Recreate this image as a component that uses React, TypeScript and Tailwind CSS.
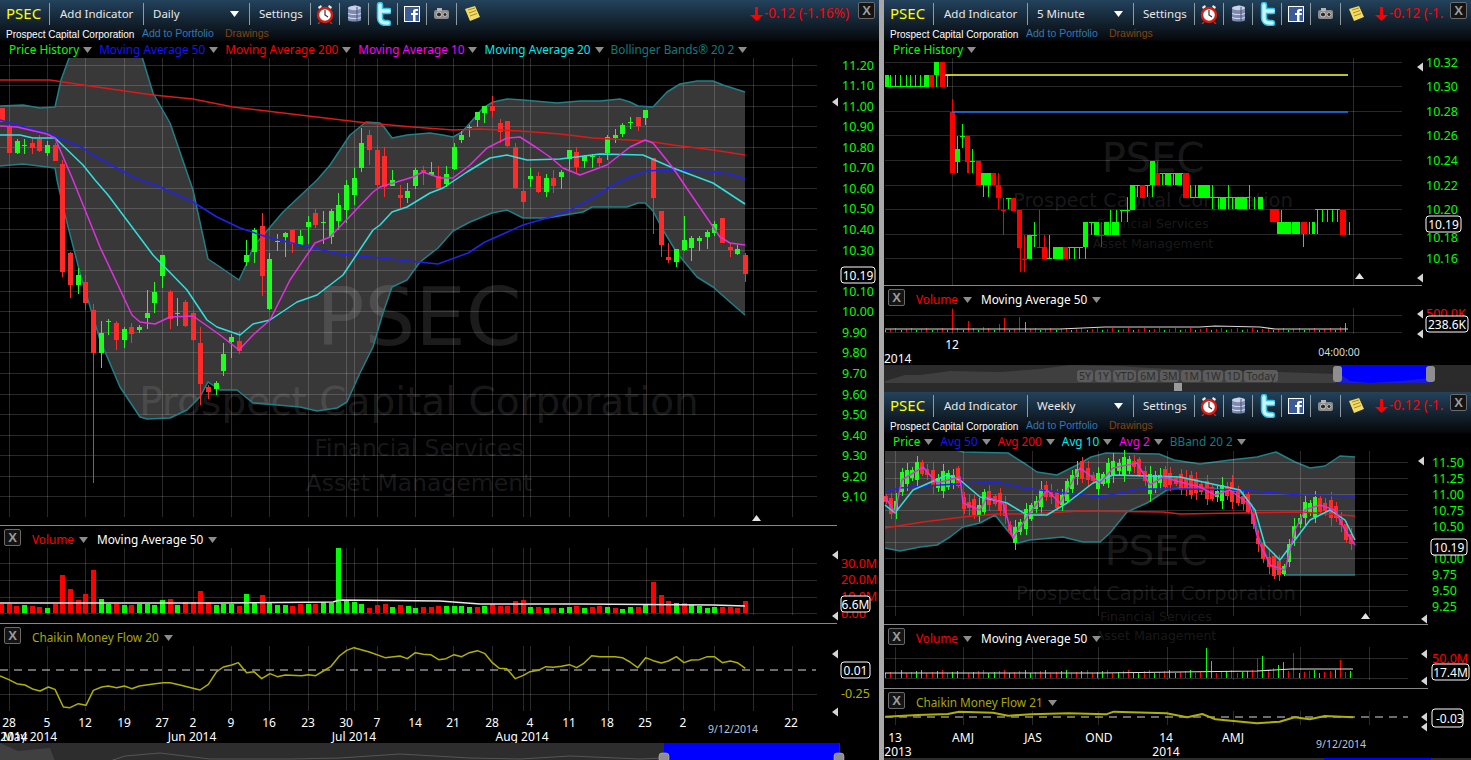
import type { ReactNode } from "react";

type Pt = [number, number];
type Candle = [number, "g" | "r", number, number, number, number];
type Bar = [number, number, number, number, string];

const GREEN = "#00ff00";
const RED = "#ff0000";
const CG = "#1eff1e";
const CR = "#ff2a2a";
const TEAL = "#1f8088";
const BAND = "#383838";
const OLIVE = "#b0b000";

const pts = (list: Pt[]) => list.map((p) => p.join(",")).join(" ");

// x, colour, wick top, body top, body bottom, wick bottom
const mainCandles: Candle[] = [
  [2, "r", 108, 108, 122, 122], [9, "r", 125, 127, 153, 153], [17, "g", 139, 141, 153, 154], [24, "g", 139, 145, 146, 154],
  [32, "r", 139, 143, 148, 154], [39, "r", 135, 139, 151, 152], [47, "g", 141, 145, 153, 156], [55, "r", 143, 145, 161, 161],
  [62, "r", 160, 164, 272, 277], [70, "r", 252, 253, 285, 298], [78, "g", 268, 275, 285, 294], [85, "r", 275, 282, 303, 310],
  [93, "r", 304, 310, 353, 483], [101, "g", 321, 333, 353, 368], [108, "g", 319, 321, 322, 335], [116, "r", 321, 323, 340, 350],
  [124, "g", 327, 329, 340, 348], [131, "r", 323, 327, 334, 343], [139, "g", 325, 327, 330, 333], [147, "g", 290, 313, 318, 329],
  [154, "g", 282, 292, 303, 313], [162, "g", 255, 255, 276, 288], [170, "r", 290, 292, 319, 329], [177, "g", 298, 313, 314, 326],
  [185, "r", 300, 302, 326, 327], [193, "r", 310, 313, 340, 341], [200, "r", 327, 343, 384, 405], [208, "r", 385, 387, 392, 399],
  [216, "g", 381, 383, 389, 395], [223, "g", 343, 354, 371, 376], [231, "g", 334, 337, 342, 358], [239, "r", 331, 341, 351, 354],
  [246, "g", 240, 255, 262, 266], [254, "g", 228, 230, 252, 263], [262, "r", 213, 226, 276, 296], [269, "g", 253, 259, 309, 310],
  [277, "g", 234, 241, 242, 251], [285, "g", 232, 233, 237, 257], [292, "r", 230, 230, 244, 253], [300, "g", 230, 236, 245, 245],
  [308, "g", 216, 222, 227, 244], [315, "r", 209, 213, 225, 228], [323, "g", 211, 222, 223, 244], [331, "g", 209, 211, 237, 244],
  [338, "g", 193, 205, 221, 230], [346, "g", 180, 185, 210, 223], [354, "g", 168, 178, 195, 205], [361, "g", 128, 143, 168, 172],
  [369, "r", 130, 135, 150, 165], [377, "r", 145, 150, 185, 187], [384, "r", 147, 156, 187, 197], [392, "g", 170, 180, 186, 186],
  [400, "r", 185, 195, 198, 208], [407, "g", 183, 191, 198, 203], [415, "g", 168, 170, 186, 189], [423, "r", 166, 170, 172, 185],
  [431, "g", 162, 172, 175, 176], [438, "r", 166, 176, 188, 188], [446, "g", 166, 174, 184, 187], [454, "g", 143, 147, 169, 170],
  [461, "g", 131, 135, 140, 143], [469, "g", 125, 127, 128, 137], [477, "g", 112, 112, 120, 127], [484, "g", 106, 106, 113, 123],
  [492, "r", 96, 106, 111, 117], [500, "r", 119, 123, 132, 143], [507, "r", 121, 121, 146, 147], [515, "r", 143, 147, 188, 189],
  [523, "r", 180, 191, 202, 209], [530, "g", 168, 176, 179, 187], [538, "r", 172, 176, 192, 193], [546, "g", 174, 178, 192, 197],
  [553, "r", 170, 178, 186, 193], [561, "g", 170, 172, 177, 189], [569, "g", 150, 150, 159, 172], [576, "r", 147, 152, 167, 173],
  [584, "g", 155, 156, 161, 168], [592, "g", 154, 156, 157, 168], [599, "r", 156, 158, 163, 168], [607, "g", 135, 137, 153, 160],
  [615, "g", 129, 135, 138, 143], [622, "g", 123, 125, 134, 137], [630, "g", 117, 122, 123, 129], [638, "r", 117, 117, 126, 131],
  [645, "g", 110, 110, 118, 125], [653, "r", 158, 158, 198, 234], [661, "r", 211, 211, 245, 257], [668, "r", 243, 257, 260, 263],
  [676, "g", 249, 249, 262, 267], [684, "g", 216, 240, 250, 251], [691, "g", 236, 238, 248, 261], [699, "g", 236, 238, 241, 251],
  [707, "g", 230, 232, 237, 249], [714, "g", 221, 224, 233, 236], [722, "r", 218, 218, 243, 243], [730, "r", 243, 247, 250, 257],
  [737, "g", 245, 249, 254, 255], [745, "r", 253, 255, 274, 282],
];

const upper: Pt[] = [[0, 106], [23, 105], [40, 108], [55, 107], [61, 80], [72, 50], [140, 50], [153, 93], [170, 123], [193, 190], [208, 259], [220, 267], [239, 280], [247, 263], [253, 247], [283, 212], [317, 180], [330, 165], [350, 135], [366, 122], [380, 123], [384, 127], [392, 138], [407, 135], [430, 133], [443, 135], [453, 137], [462, 132], [470, 123], [483, 108], [493, 102], [507, 99], [523, 100], [557, 103], [580, 101], [600, 101], [620, 99], [630, 102], [638, 106], [653, 107], [667, 92], [680, 84], [697, 81], [713, 81], [723, 85], [745, 92]];
const lower: Pt[] = [[0, 166], [23, 164], [55, 168], [57, 180], [65, 215], [80, 273], [100, 340], [120, 387], [140, 417], [147, 419], [170, 418], [187, 410], [200, 397], [208, 382], [220, 390], [237, 390], [253, 403], [300, 407], [317, 411], [337, 408], [347, 402], [360, 373], [373, 347], [383, 313], [392, 287], [407, 280], [420, 262], [438, 248], [453, 231], [470, 222], [492, 213], [507, 210], [523, 218], [547, 218], [583, 212], [592, 207], [627, 207], [638, 203], [645, 203], [653, 211], [663, 230], [677, 253], [697, 277], [713, 287], [730, 302], [745, 315]];
const ma50: Pt[] = [[0, 120], [17, 125], [47, 133], [83, 148], [93, 155], [133, 177], [160, 187], [193, 202], [217, 217], [240, 228], [267, 237], [300, 245], [340, 254], [380, 258], [438, 264], [468, 253], [485, 242], [523, 225], [547, 218], [570, 210], [593, 198], [613, 185], [630, 177], [647, 171], [663, 170], [713, 172], [730, 174], [745, 179]];
const ma200: Pt[] = [[0, 80], [50, 80], [83, 85], [153, 95], [193, 99], [233, 107], [283, 113], [367, 123], [413, 127], [453, 130], [480, 129], [520, 131], [560, 134], [593, 138], [647, 141], [673, 145], [713, 150], [745, 155]];
const ma10: Pt[] = [[0, 126], [17, 127], [47, 134], [55, 138], [73, 180], [100, 247], [132, 315], [140, 322], [155, 324], [170, 317], [193, 316], [220, 335], [239, 350], [253, 335], [270, 320], [290, 280], [315, 243], [330, 237], [353, 213], [373, 192], [380, 187], [413, 177], [423, 172], [440, 178], [453, 178], [470, 165], [487, 148], [507, 138], [520, 137], [537, 148], [550, 157], [563, 168], [580, 175], [607, 165], [630, 147], [645, 140], [653, 143], [673, 168], [720, 237], [730, 243], [745, 245]];
const ma20: Pt[] = [[0, 135], [20, 135], [33, 138], [55, 138], [83, 165], [95, 180], [108, 195], [153, 255], [187, 290], [207, 320], [217, 327], [240, 335], [253, 324], [270, 320], [297, 302], [317, 295], [343, 275], [373, 230], [380, 225], [392, 212], [407, 207], [430, 193], [443, 188], [467, 172], [490, 158], [507, 155], [527, 160], [560, 159], [600, 154], [643, 155], [673, 168], [713, 183], [745, 204]];

const volLeft: [string, number][] = [
  ["r", 9], ["r", 9], ["r", 7], ["g", 8], ["r", 7], ["r", 6], ["g", 5], ["r", 9], ["r", 38], ["r", 24], ["r", 13], ["r", 19], ["r", 43], ["g", 14], ["g", 9], ["r", 9],
  ["g", 8], ["r", 8], ["g", 9], ["g", 9], ["g", 8], ["g", 13], ["r", 14], ["g", 8], ["r", 11], ["r", 11], ["r", 22], ["r", 11], ["g", 8], ["g", 9], ["g", 9], ["r", 7],
  ["g", 19], ["g", 11], ["r", 18], ["g", 10], ["g", 8], ["g", 8], ["r", 7], ["r", 9], ["g", 9], ["r", 9], ["g", 11], ["g", 10], ["g", 65], ["g", 12], ["g", 11], ["g", 9],
  ["r", 5], ["r", 8], ["r", 9], ["g", 6], ["r", 8], ["g", 7], ["g", 5], ["r", 6], ["r", 6], ["r", 7], ["g", 7], ["g", 7], ["g", 7], ["g", 6], ["r", 6], ["g", 7],
  ["r", 9], ["r", 7], ["r", 7], ["r", 12], ["r", 13], ["g", 6], ["r", 6], ["g", 5], ["r", 5], ["g", 5], ["g", 6], ["r", 7], ["g", 5], ["r", 6], ["r", 7], ["g", 6],
  ["r", 5], ["g", 4], ["g", 6], ["r", 6], ["g", 9], ["r", 31], ["r", 18], ["r", 12], ["g", 10], ["r", 10], ["g", 8], ["g", 7], ["g", 5], ["g", 6], ["r", 6], ["r", 6], ["r", 5], ["r", 12],
];

const chaikinLeftA: Pt[] = [[0, 495], [25, 505], [50, 518], [75, 522], [100, 535], [120, 540], [145, 528], [165, 535], [190, 588], [210, 590], [235, 578], [258, 583], [280, 538], [305, 528], [325, 525], [350, 530], [373, 525], [395, 533], [418, 525], [465, 518], [490, 515], [510, 515], [540, 522], [600, 537], [625, 520], [650, 482], [670, 468], [695, 462], [715, 455], [740, 485], [762, 482], [785, 503], [810, 488], [832, 497], [856, 492], [905, 494], [925, 491], [947, 494], [970, 480], [992, 467], [1018, 435], [1040, 418], [1062, 410], [1108, 423], [1155, 440], [1200, 435], [1222, 443], [1246, 425], [1270, 430], [1292, 431], [1316, 446], [1338, 443], [1362, 431], [1385, 437], [1408, 425], [1432, 419]];
const chaikinLeftB: Pt[] = [[0, 422], [15, 428], [37, 455], [58, 472], [80, 473], [106, 503], [130, 493], [150, 482], [175, 478], [197, 467], [220, 469], [244, 466], [268, 461], [290, 470], [310, 458], [335, 434], [360, 437], [405, 437], [427, 440], [450, 453], [473, 470], [497, 440], [520, 449], [544, 456], [565, 450], [589, 437], [612, 455], [634, 447], [658, 446], [682, 437], [703, 437], [727, 455], [751, 450], [772, 455], [796, 472]];
const chaikinLeft: Pt[] = [
  ...chaikinLeftA.map(([x, y]): Pt => [x / 3, 510 + y / 3]),
  ...chaikinLeftB.map(([x, y]): Pt => [480 + x / 3, 510 + y / 3]),
];

// 5 minute chart, traced as plain rects: x, top, width, bottom, colour
const tick = (x: number, t: number, b: number, c = GREEN): Bar => [x, t, 1, b, c];
const body = (x: number, w: number, t: number, b: number, c = GREEN): Bar => [x, t, w, b, c];
const minuteBars: Bar[] = [
  body(885, 4, 75, 87), body(889, 16, 86, 87),
  tick(890, 75, 87), tick(895, 75, 87), tick(900, 75, 87), tick(906, 75, 87), tick(910, 75, 87), tick(915, 75, 87), tick(920, 75, 87),
  body(905, 19, 86, 87), body(924, 5, 75, 87), body(929, 5, 75, 87, RED), body(934, 5, 62, 75), tick(936, 75, 87), body(940, 5, 62, 87, RED), tick(947, 75, 87), body(945, 5, 75, 76),
  tick(952, 99, 113, RED), body(950, 5, 112, 173, RED), tick(957, 136, 173), body(955, 5, 149, 162), tick(962, 124, 148), body(960, 5, 136, 137),
  body(965, 5, 136, 162, RED), tick(967, 162, 173, RED), tick(972, 149, 173), body(970, 5, 161, 162), tick(968, 162, 173, RED),
  body(976, 5, 161, 185, RED), body(981, 10, 173, 185), tick(983, 185, 197), tick(988, 185, 197), body(991, 5, 173, 185, RED), body(996, 5, 185, 198, RED), tick(998, 173, 197, RED),
  tick(998, 198, 209, RED), tick(1003, 198, 235, RED), body(1001, 5, 210, 211, RED), tick(1008, 198, 209), body(1006, 5, 198, 199), body(1011, 5, 198, 211, RED),
  body(1017, 5, 210, 248, RED), tick(1020, 248, 272, RED), tick(1024, 235, 272, RED), body(1022, 5, 259, 260, RED), body(1027, 5, 235, 259), tick(1034, 222, 247), body(1032, 5, 235, 236),
  tick(1039, 210, 247, RED), body(1037, 5, 247, 248, RED), body(1042, 5, 247, 259, RED), tick(1044, 235, 247, RED), tick(1049, 235, 259), body(1047, 5, 258, 259),
  body(1053, 10, 247, 259), body(1063, 5, 247, 259, RED), tick(1069, 247, 259), tick(1074, 247, 259), tick(1079, 247, 259), tick(1085, 247, 259), body(1068, 15, 247, 248),
  body(1083, 5, 222, 247), tick(1091, 222, 235), body(1089, 5, 222, 223), body(1094, 5, 222, 235), tick(1101, 222, 247, RED), body(1099, 5, 235, 236, RED), tick(1106, 222, 235), body(1104, 5, 222, 235),
  tick(1110, 210, 235), body(1112, 7, 222, 235), tick(1116, 210, 222), tick(1121, 210, 222), tick(1127, 197, 222), body(1120, 10, 210, 211),
  body(1130, 5, 185, 210), tick(1137, 185, 197), body(1135, 5, 185, 186), body(1140, 5, 185, 198, RED), tick(1147, 185, 197), tick(1152, 185, 197), body(1145, 5, 185, 186),
  body(1150, 5, 161, 185), body(1155, 5, 173, 185, RED), tick(1157, 161, 173, RED), body(1160, 24, 173, 174),
  tick(1162, 173, 185), body(1165, 6, 173, 185), tick(1173, 173, 185), body(1175, 7, 173, 185), tick(1183, 173, 185),
  body(1183, 6, 173, 198, RED), tick(1190, 185, 197), tick(1195, 185, 197), body(1198, 12, 185, 197), tick(1212, 185, 209), tick(1218, 197, 209), body(1220, 6, 197, 209, GREEN), body(1190, 60, 197, 198),
  tick(1228, 185, 209), tick(1232, 197, 209), body(1235, 12, 197, 209), tick(1249, 185, 209), tick(1254, 197, 209), body(1258, 5, 197, 209),
  body(1270, 9, 209, 222, RED), tick(1281, 210, 234), body(1277, 14, 222, 234), body(1292, 8, 222, 234), tick(1303, 222, 247), body(1301, 6, 222, 234, RED),
  tick(1309, 222, 234), body(1312, 3, 222, 234), tick(1317, 210, 234), tick(1322, 210, 222), tick(1327, 210, 222), tick(1332, 210, 222), tick(1337, 210, 222), body(1315, 25, 209, 210),
  body(1340, 6, 210, 235, RED), tick(1349, 222, 235),
];

const minuteVol: Bar[] = Array.from({ length: 90 }, (_, i) => {
  const x = 885 + i * 5.17;
  const spikes: Record<number, number> = { 13: 23, 16: 11, 19: 5, 22: 8, 23: 14, 26: 15, 27: 10, 88: 5, 89: 9 };
  const h = spikes[i] ?? 2 + ((i * 7) % 3);
  return [Math.round(x), 332 - h, 1, 332, i === 89 || i % 3 === 0 ? GREEN : RED] as Bar;
});

const at = (line: Pt[], x: number) => {
  for (let i = 1; i < line.length; i++) {
    if (x <= line[i][0]) {
      const [x0, y0] = line[i - 1];
      const [x1, y1] = line[i];
      return y0 + ((y1 - y0) * (x - x0)) / (x1 - x0);
    }
  }
  return line[line.length - 1][1];
};

const wkUpper: Pt[] = [[885, 440], [950, 448], [963, 452], [1008, 453], [1027, 465], [1037, 472], [1057, 475], [1077, 465], [1091, 457], [1106, 453], [1159, 454], [1174, 460], [1200, 464], [1230, 460], [1257, 457], [1276, 452], [1295, 462], [1310, 468], [1325, 466], [1340, 456], [1355, 457]];
const wkLower: Pt[] = [[885, 548], [900, 551], [920, 547], [937, 545], [950, 537], [963, 527], [980, 523], [995, 515], [1007, 530], [1018, 543], [1030, 540], [1063, 537], [1083, 542], [1100, 542], [1110, 533], [1127, 512], [1147, 503], [1167, 490], [1180, 488], [1210, 488], [1240, 492], [1252, 505], [1258, 535], [1270, 565], [1285, 575], [1320, 575], [1355, 575]];
const wk200: Pt[] = [[885, 528], [923, 522], [963, 517], [997, 514], [1030, 514], [1080, 511], [1163, 512], [1180, 514], [1240, 513], [1300, 512], [1355, 516]];
const wk50: Pt[] = [[885, 492], [900, 488], [940, 485], [997, 482], [1023, 488], [1057, 492], [1100, 497], [1140, 489], [1180, 489], [1240, 490], [1300, 495], [1355, 496]];
const wk10: Pt[] = [[885, 505], [895, 513], [913, 490], [947, 475], [960, 480], [980, 497], [1007, 503], [1027, 515], [1047, 515], [1067, 503], [1093, 483], [1113, 475], [1180, 477], [1240, 490], [1255, 510], [1265, 545], [1280, 560], [1295, 540], [1310, 520], [1330, 510], [1345, 520], [1355, 540]];
const wk2: Pt[] = [[885, 497], [895, 512], [902, 480], [923, 467], [937, 483], [960, 477], [963, 503], [980, 510], [987, 497], [1003, 503], [1013, 538], [1027, 517], [1047, 490], [1060, 503], [1080, 468], [1100, 483], [1113, 468], [1137, 463], [1150, 485], [1163, 477], [1180, 482], [1200, 487], [1215, 495], [1230, 490], [1250, 505], [1258, 540], [1270, 565], [1285, 570], [1295, 530], [1305, 510], [1320, 505], [1335, 510], [1345, 530], [1355, 545]];

const weekCandles: Candle[] = Array.from({ length: 91 }, (_, i) => {
  const x = 886 + i * 5.17;
  const y = at(wk2, x);
  const up = at(wk2, x + 5) < y;
  const span = 3 + (i * 5) % 8;
  const wick = 2 + (i * 3) % 7;
  return [Math.round(x), up ? "g" : "r", y - span - wick, y - span, y + span, y + span + wick];
});

const weekVol: Bar[] = Array.from({ length: 91 }, (_, i) => {
  const x = Math.round(885 + i * 5.17);
  const spikes: Record<number, number> = { 62: 30, 63: 17, 72: 20, 73: 22, 75: 10, 76: 13, 77: 16, 79: 25, 88: 18 };
  const h = spikes[i] ?? 5 + (i % 4);
  return [x, 678 - h, 1, 678, (i * 5) % 7 < 3 ? GREEN : RED] as Bar;
});

const wkChaikin: Pt[] = ([[14, 350], [100, 345], [180, 342], [210, 335], [300, 338], [340, 347], [400, 343], [500, 340], [600, 343], [620, 335], [760, 340], [815, 352], [855, 342], [890, 358], [1000, 370], [1060, 365], [1100, 352], [1140, 358], [1180, 348], [1255, 352]] as Pt[]).map(([x, y]): Pt => [880 + x / 2.653, 600 + y / 3]);

function Caret({ light = false }: { light?: boolean }) {
  return (
    <svg width="9" height="6" viewBox="0 0 9 6" className="shrink-0">
      <path d="M0 0h9L4.5 6z" fill={light ? "#ffffff" : "#8c8c8c"} />
    </svg>
  );
}

function Sep() {
  return <div className="h-[22px] w-px shrink-0 bg-[#8f9aa3]" />;
}

function CloseBox() {
  return (
    <div className="flex h-[17px] w-[17px] items-center justify-center rounded-[2px] border border-[#6a6a6a] bg-[#141414] font-['Liberation_Sans',sans-serif] text-[13px] leading-none font-bold text-[#9c9c9c]">
      X
    </div>
  );
}

function ClockIcon() {
  return (
    <svg width="18" height="20" viewBox="0 0 18 20">
      <path d="M2 3l3-2 1 2-3 2zM16 3l-3-2-1 2 3 2z" fill="#f0f0e8" />
      <circle cx="9" cy="11" r="7" fill="#fff" stroke="#d81e10" strokeWidth="2.4" />
      <path d="M9 6v5l3 2" stroke="#333" fill="none" strokeWidth="1.2" />
      <path d="M4 18l-2 2M14 18l2 2" stroke="#d81e10" strokeWidth="1.6" />
    </svg>
  );
}

function DbIcon() {
  return (
    <svg width="15" height="19" viewBox="0 0 15 19">
      <path d="M1 4v12c0 2 13 2 13 0V3L8 1z" fill="#7d8bb0" />
      <ellipse cx="7.5" cy="4" rx="6.5" ry="2.2" fill="#c9d2e8" />
      <path d="M1 9c0 2 13 2 13 0M1 13c0 2 13 2 13 0" stroke="#dfe5f2" fill="none" />
      <path d="M10 3v14" stroke="#4a5578" />
    </svg>
  );
}

function TwitterIcon() {
  return (
    <svg width="15" height="24" viewBox="0 0 15 24">
      <path d="M4 3v13c0 3 2 5 6 5h2M4 9h9" fill="none" stroke="#2cc5ea" strokeWidth="6.5" strokeLinecap="round" />
      <path d="M4 3v13c0 3 2 5 6 5h2M4 9h9" fill="none" stroke="#c9f4fc" strokeWidth="3.5" strokeLinecap="round" />
    </svg>
  );
}

function FbIcon() {
  return (
    <svg width="16" height="16" viewBox="0 0 16 16">
      <rect x="0.5" y="0.5" width="15" height="15" fill="#3b5b99" stroke="#ffffff" />
      <path d="M14 3h-2.5C10 3 9 4 9 5.5V7H7v2h2v6h2.5V9h2.2l.3-2h-2.5V6c0-.6.2-1 1-1H14z" fill="#fff" />
    </svg>
  );
}

function CameraIcon() {
  return (
    <svg width="15" height="11" viewBox="0 0 15 11">
      <rect x="0" y="2" width="15" height="9" rx="2" fill="#8b8b8b" />
      <rect x="3" y="0" width="5" height="3" fill="#b5b5b5" />
      <circle cx="5" cy="6.5" r="2.5" fill="#2a2a2a" stroke="#d0d0d0" />
      <circle cx="11" cy="6.5" r="2" fill="#2a2a2a" stroke="#c0c0c0" />
    </svg>
  );
}

function NoteIcon() {
  return (
    <svg width="15" height="15" viewBox="0 0 15 15">
      <path d="M0 3l10-3 5 11-10 4z" fill="#f4dc64" />
      <path d="M3 4l7-2M4 7l7-2.5M5 10l7-2.5" stroke="#a58a24" />
    </svg>
  );
}

function Legend({ items, wide = false }: { items: [string, string][]; wide?: boolean }) {
  return (
    <div className={wide ? "flex items-center gap-[9px]" : "flex items-center gap-[7px]"}>
      {items.map(([label, color]) => (
        <div key={label} className={wide ? "flex items-center gap-[5px]" : "flex items-center gap-[4px]"}>
          <span className="whitespace-nowrap" style={{ color }}>
            {label}
          </span>
          <Caret />
        </div>
      ))}
    </div>
  );
}

function Header({
  period,
  clipChange,
  legend,
}: {
  period: string;
  clipChange?: boolean;
  legend: [string, string][];
}) {
  return (
    <div className="relative h-[58px] bg-[linear-gradient(#23425c,#06090c_40px,#000_42px)]">
      <div className="flex h-[27px] items-center text-[11.5px] text-[#e8e8e8]">
        <div className="w-[49px] pl-[6px] text-[15px] text-[#ffff00]">PSEC</div>
        <Sep />
        <div className="w-[93px] pl-[10px] whitespace-nowrap">Add Indicator</div>
        <Sep />
        <div className="flex w-[105px] items-center justify-between pr-[10px] pl-[9px]">
          <span>{period}</span>
          <Caret light />
        </div>
        <Sep />
        <div className="w-[60px] pl-[9px]">Settings</div>
        <Sep />
        <div className="flex w-[28px] justify-center"><ClockIcon /></div>
        <Sep />
        <div className="flex w-[28px] justify-center"><DbIcon /></div>
        <Sep />
        <div className="flex w-[28px] justify-center"><TwitterIcon /></div>
        <Sep />
        <div className="flex w-[28px] justify-center"><FbIcon /></div>
        <Sep />
        <div className="flex w-[29px] justify-center"><CameraIcon /></div>
        <Sep />
        <div className="flex w-[30px] justify-center"><NoteIcon /></div>
        <div className={clipChange ? "ml-[4px] flex items-center gap-[1px]" : "ml-[263px] flex items-center gap-[1px]"}>
          <svg width="13" height="14" viewBox="0 0 13 14" className="shrink-0">
            <path d="M5 0h3v8h5l-6.500 6L0 8h5z" fill={RED} />
          </svg>
          <span className="text-[13.5px] whitespace-nowrap text-[#ff0000]">{clipChange ? "-0.12 (-1." : "-0.12 (-1.16%)"}</span>
        </div>
      </div>
      <div className="flex h-[14px] items-center pl-[6px] font-['Liberation_Sans',sans-serif] text-[10.5px]">
        <span className="w-[136px] text-[10px] whitespace-nowrap text-white">Prospect Capital Corporation</span>
        <span className="w-[83px] whitespace-nowrap text-[#3576b4]">Add to Portfolio</span>
        <span className="text-[#84430f]">Drawings</span>
      </div>
      <div className="flex h-[17px] items-center pt-[1px] pl-[9px] text-[11.8px]">
        <Legend items={legend} />
      </div>
      <div className="absolute top-[2px] right-[4px]">
        <CloseBox />
      </div>
    </div>
  );
}

function PaneLegend({ items }: { items: [string, string][] }) {
  return (
    <div className="flex h-[22px] items-start pt-[3px] text-[11.8px]">
      <div className="w-[32px] pl-[4px]">
        <CloseBox />
      </div>
      <div className="pt-[2px]">
        <Legend items={items} wide />
      </div>
    </div>
  );
}

function Chart({
  x,
  y,
  w,
  h,
  spill = false,
  children,
}: {
  x: number;
  y: number;
  w: number;
  h: number;
  spill?: boolean;
  children: ReactNode;
}) {
  return (
    <svg width={w} height={h} viewBox={`${x} ${y} ${w} ${h}`} className={spill ? "block shrink-0 overflow-visible" : "block shrink-0"}>
      {children}
    </svg>
  );
}

function Grid({ xs, ys, x0, x1, y0, y1 }: { xs: number[]; ys: number[]; x0: number; x1: number; y0: number; y1: number }) {
  return (
    <g stroke="#ffffff" strokeOpacity="0.16" shapeRendering="crispEdges">
      {xs.map((x) => (
        <line key={`v${x}`} x1={x} x2={x} y1={y0} y2={y1} />
      ))}
      {ys.map((y) => (
        <line key={`h${y}`} x1={x0} x2={x1} y1={y} y2={y} />
      ))}
    </g>
  );
}

function Line({ points, color, width = 1.5 }: { points: Pt[]; color: string; width?: number }) {
  return <polyline points={pts(points)} fill="none" stroke={color} strokeWidth={width} strokeLinejoin="round" />;
}

function Candles({ data, w }: { data: Candle[]; w: number }) {
  return (
    <g shapeRendering="crispEdges">
      {data.map(([x, c, wt, bt, bb, wb], i) => {
        const fill = c === "g" ? CG : CR;
        return (
          <g key={i} fill={fill}>
            <rect x={x} y={wt} width={1} height={wb - wt} />
            <rect x={x - Math.floor(w / 2)} y={bt} width={w} height={Math.max(bb - bt, 1)} />
          </g>
        );
      })}
    </g>
  );
}

function Bars({ data }: { data: Bar[] }) {
  return (
    <g shapeRendering="crispEdges">
      {data.map(([x, t, w, b, c], i) => (
        <rect key={i} x={x} y={t} width={w} height={b - t} fill={c} />
      ))}
    </g>
  );
}

function Watermark({ cx, ys, sizes }: { cx: number; ys: number[]; sizes: number[] }) {
  return (
    <g fill="#ffffff" fillOpacity="0.11" textAnchor="middle" fontFamily="'DejaVu Sans', sans-serif">
      <text x={cx} y={ys[0]} fontSize={sizes[0]}>PSEC</text>
      <text x={cx} y={ys[1]} fontSize={sizes[1]}>Prospect Capital Corporation</text>
      <text x={cx} y={ys[2]} fontSize={sizes[2]}>Financial Services</text>
      <text x={cx} y={ys[3]} fontSize={sizes[2]}>Asset Management</text>
    </g>
  );
}

function AxisLabels({ x, items, color, size = 12.5 }: { x: number; items: [string, number][]; color: string; size?: number }) {
  return (
    <g fill={color} fontSize={size} dominantBaseline="central">
      {items.map(([label, y]) => (
        <text key={label} x={x} y={y}>{label}</text>
      ))}
    </g>
  );
}

function Badge({ x, y, w, label }: { x: number; y: number; w: number; label: string }) {
  return (
    <g>
      <rect x={x} y={y} width={w} height={16} rx={3} fill="#000" stroke="#ffffff" />
      <text x={x + w / 2} y={y + 8} fill="#ffffff" fontSize={12} textAnchor="middle" dominantBaseline="central">{label}</text>
    </g>
  );
}

function TriLeft({ x, y }: { x: number; y: number }) {
  return <path d={`M${x} ${y}l6 -4.500v9z`} fill="#d4d4d4" />;
}

function TriUp({ x, y }: { x: number; y: number }) {
  return <path d={`M${x} ${y}l4.500 -6l4.500 6z`} fill="#e4e4e4" />;
}

function AxisText({ items, y, size = 12 }: { items: [string, number][]; y: number; size?: number }) {
  return (
    <g fill="#ffffff" fontSize={size} textAnchor="middle">
      {items.map(([label, x]) => (
        <text key={`${label}${x}`} x={x} y={y}>{label}</text>
      ))}
    </g>
  );
}

const mainXs = [9, 47, 85, 124, 162, 193, 231, 269, 308, 346, 354, 377, 415, 453, 492, 523, 530, 569, 608, 646, 683, 714, 753, 792];
const mainYs = Array.from({ length: 22 }, (_, i) => 65 + i * 20.57);
const mainLabels: [string, number][] = Array.from({ length: 22 }, (_, i) => [(11.2 - i * 0.1).toFixed(2), 65 + i * 20.57] as [string, number]).filter(([l]) => l !== "10.20");

function MainPane() {
  return (
    <Chart x={0} y={58} w={879} h={467}>
      <polygon points={pts([...upper, ...[...lower].reverse()])} fill={BAND} />
      <Grid xs={mainXs} ys={mainYs} x0={0} x1={817} y0={58} y1={517} />
      <Watermark cx={419} ys={[345, 415, 456, 491]} sizes={[80, 39, 23.5]} />
      <Line points={upper} color={TEAL} />
      <Line points={lower} color={TEAL} />
      <Candles data={mainCandles} w={5} />
      <Line points={ma200} color="#e01818" />
      <Line points={ma50} color="#2222ee" />
      <Line points={ma20} color="#30e0e0" />
      <Line points={ma10} color="#e030e0" />
      <AxisLabels x={842} items={mainLabels} color={GREEN} />
      <Badge x={841} y={267} w={34} label="10.19" />
      <TriLeft x={832} y={102} />
      <TriUp x={752} y={521} />
    </Chart>
  );
}

const volAvgLeft: Pt[] = [[0, 603], [220, 603], [333, 602], [340, 600], [440, 601], [480, 604], [580, 604], [713, 605], [745, 606]];

function LeftVolume() {
  const data: Bar[] = volLeft.map(([c, h], i) => [Math.round(i * 7.67 - 1), 613 - h, 5, 613, c === "g" ? GREEN : RED]);
  return (
    <Chart x={0} y={548} w={879} h={75}>
      <Grid xs={mainXs} ys={[563, 580, 597, 613]} x0={0} x1={817} y0={548} y1={615} />
      <Bars data={data} />
      <Line points={volAvgLeft} color="#e8e8e8" />
      <AxisLabels x={841} items={[["30.0M", 563], ["20.0M", 579], ["10.0M", 596], ["0.00", 613]]} color={RED} />
      <Badge x={841} y={596} w={29} label="6.6M" />
      <TriLeft x={832} y={555} />
      <TriLeft x={832} y={616} />
    </Chart>
  );
}

function LeftChaikin() {
  return (
    <Chart x={0} y={645} w={879} h={97} spill>
      <Grid xs={mainXs} ys={[693]} x0={0} x1={817} y0={645} y1={710} />
      <line x1={0} x2={816} y1={669} y2={669} stroke="#d8d8d8" strokeWidth={1} strokeDasharray="8 6" />
      <Line points={chaikinLeft} color={OLIVE} />
      <Badge x={841} y={661} w={29} label="0.01" />
      <AxisLabels x={841} items={[["-0.25", 692]]} color={OLIVE} />
      <TriLeft x={832} y={653} />
      <TriLeft x={832} y={711} />
      <AxisText y={726} items={[["28", 9], ["5", 47], ["12", 85], ["19", 124], ["27", 162], ["2", 193], ["9", 231], ["16", 269], ["23", 308], ["30", 346], ["7", 377], ["14", 415], ["21", 453], ["28", 492], ["4", 530], ["11", 569], ["18", 607], ["25", 645], ["2", 683], ["22", 791]]} />
      <text x={733} y={732} fill="#bcc4dc" fontSize={10.5} textAnchor="middle">9/12/2014</text>
      <AxisText y={740} items={[["2014", 14], ["May 2014", 30], ["Jun 2014", 192], ["Jul 2014", 354], ["Aug 2014", 522]]} />
    </Chart>
  );
}

function Handle({ x, y, h }: { x: number; y: number; h: number }) {
  return <rect x={x} y={y} width={10} height={h} rx={3} fill="#8e8e8e" stroke="#c8c8c8" strokeWidth={0.5} />;
}

function LeftNav() {
  return (
    <Chart x={0} y={742} w={879} h={18}>
      <rect x={0} y={742} width={840} height={18} fill="#2d2d2d" />
      <polygon points="0,742 18,750 50,747 55,760 0,760" fill="#404040" />
      <polyline points="55,760 110,760 125,755 160,752 210,758 290,758 340,757 400,753 470,757 520,758 570,755 640,758 664,757" fill="none" stroke="#555555" />
      <rect x={664} y={742} width={175} height={18} fill="#0000ff" />
      <Handle x={659} y={752} h={10} />
      <Handle x={834} y={752} h={10} />
    </Chart>
  );
}

const minYs = Array.from({ length: 9 }, (_, i) => 62 + i * 24.6);
const minLabels: [string, number][] = Array.from({ length: 9 }, (_, i) => [(10.32 - i * 0.02).toFixed(2), 62 + i * 24.6] as [string, number]);
const rangeButtons = ["5Y", "1Y", "YTD", "6M", "3M", "1M", "1W", "1D", "Today"];

function MinutePane() {
  return (
    <>
      <Chart x={884} y={58} w={587} h={227}>
        <Grid xs={[952, 1353]} ys={minYs} x0={885} x1={1402} y0={58} y1={285} />
        <Watermark cx={1153} ys={[172, 207, 228, 248]} sizes={[40, 19.5, 12.5]} />
        <Bars data={minuteBars} />
        <line x1={945} x2={1348} y1={75} y2={75} stroke="#ffff33" strokeWidth={1.5} />
        <line x1={952} x2={1348} y1={112} y2={112} stroke="#1e78ff" strokeWidth={1.5} />
        <AxisLabels x={1426} items={minLabels.filter(([l]) => l !== "10.18")} color={GREEN} />
        <text x={1426} y={237} fill={GREEN} fontSize={12.5} dominantBaseline="central">10.18</text>
        <Badge x={1426} y={216} w={35} label="10.19" />
        <TriLeft x={1417} y={67} />
        <TriLeft x={1417} y={278} />
        <TriUp x={1355} y={279} />
      </Chart>
      <div className="h-px w-[538px] bg-[#888888]" />
      <PaneLegend items={[["Volume", RED], ["Moving Average 50", "#ffffff"]]} />
      <Chart x={884} y={308} w={587} h={57}>
        <Grid xs={[952, 1353]} ys={[315, 332]} x0={885} x1={1402} y0={308} y1={334} />
        <Bars data={minuteVol} />
        <polyline points={pts([[885, 329], [1060, 329], [1105, 327], [1200, 327], [1215, 326], [1260, 327], [1275, 329], [1348, 329]])} fill="none" stroke="#d8d8d8" strokeWidth={1.2} />
        <AxisLabels x={1426} items={[["500.0K", 313]]} color={RED} />
        <Badge x={1426} y={316} w={42} label="238.6K" />
        <TriLeft x={1417} y={314} />
        <TriLeft x={1417} y={334} />
        <text x={952} y={349} fill="#ffffff" fontSize={12} textAnchor="middle">12</text>
        <text x={1339} y={356} fill="#d8d8d8" fontSize={10.5} textAnchor="middle">04:00:00</text>
        <text x={884} y={363} fill="#ffffff" fontSize={12}>2014</text>
      </Chart>
      <div className="relative h-[18px] overflow-hidden bg-[#2b2b2b]">
        <svg width="587" height="18" viewBox="884 365 587 18" className="block">
          <polygon points="885,381 905,375 920,375 950,371 1000,372 1040,369 1070,365 1120,366 1150,368 1190,370 1280,372 1336,374 1336,383 885,383" fill="#3f3f3f" />
          <rect x={1337} y={365} width={94} height={18} fill="#0000ff" />
          <polygon points="1337,372 1350,381 1370,383 1400,381 1431,378 1431,383 1337,383" fill="#1c1cc8" />
          <rect x={1333} y={366} width={9} height={16} rx={3} fill="#8e8e8e" />
          <rect x={1426} y={366} width={9} height={16} rx={3} fill="#8e8e8e" />
        </svg>
        <div className="absolute top-[5px] left-[193px] flex gap-[2px] text-[10.5px] leading-[12px]">
          {rangeButtons.map((b) => (
            <span key={b} className="rounded-[3px] bg-[#5c5c5c] px-[2px] text-[#2e2e2e]">{b}</span>
          ))}
        </div>
      </div>
      <div className="flex h-[9px] justify-center bg-[#2a2a2a]">
        <div className="h-[8px] w-[8px] bg-[#9a9a9a]" />
      </div>
    </>
  );
}

const wkLabels: [string, number][] = [["11.50", 462], ["11.25", 478], ["11.00", 494], ["10.75", 510], ["10.50", 526], ["10.00", 558], ["9.75", 574], ["9.50", 590], ["9.25", 606]];
const wkXs = [895, 963, 1032, 1098, 1167, 1233, 1300, 1369];

function WeeklyPane() {
  return (
    <>
      <Chart x={884} y={450} w={587} h={174} spill>
        <defs>
          <clipPath id="wk-clip">
            <rect x={884} y={451} width={587} height={173} />
          </clipPath>
        </defs>
        <g clipPath="url(#wk-clip)">
          <polygon points={pts([...wkUpper, ...[...wkLower].reverse()])} fill={BAND} />
          <Line points={wkUpper} color={TEAL} />
        </g>
        <Grid xs={wkXs} ys={[462, 478, 494, 510, 526, 542, 558, 574, 590, 606]} x0={885} x1={1408} y0={451} y1={616} />
        <Watermark cx={1156} ys={[565, 600, 621, 640]} sizes={[40, 19.5, 12.5]} />
        <Line points={wkLower} color={TEAL} />
        <Candles data={weekCandles} w={4} />
        <Line points={wk200} color="#e01818" />
        <Line points={wk50} color="#2222ee" />
        <Line points={wk10} color="#30e0e0" />
        <Line points={wk2} color="#e030e0" />
        <AxisLabels x={1432} items={wkLabels} color={GREEN} />
        <Badge x={1431} y={539} w={36} label="10.19" />
        <TriLeft x={1418} y={461} />
        <TriUp x={1361} y={619} />
        <TriLeft x={1421} y={619} />
      </Chart>
      <div className="h-px w-[544px] bg-[#888888]" />
      <PaneLegend items={[["Volume", RED], ["Moving Average 50", "#ffffff"]]} />
      <Chart x={884} y={647} w={587} h={41}>
        <Grid xs={wkXs} ys={[658, 678]} x0={885} x1={1408} y0={647} y1={680} />
        <Bars data={weekVol} />
        <polyline points="885,673 1100,673 1257,671 1291,669 1353,669" fill="none" stroke="#e0e0e0" strokeWidth={1.2} />
        <AxisLabels x={1432} items={[["50.0M", 658]]} color={RED} />
        <Badge x={1432} y={664} w={37} label="17.4M" />
        <TriLeft x={1421} y={654} />
        <TriLeft x={1421} y={681} />
      </Chart>
      <div className="h-px w-[544px] bg-[#888888]" />
      <PaneLegend items={[["Chaikin Money Flow 21", "#a8a800"]]} />
      <Chart x={884} y={711} w={587} h={47} spill>
        <Grid xs={wkXs} ys={[]} x0={885} x1={1408} y0={711} y1={725} />
        <line x1={885} x2={1408} y1={717} y2={717} stroke="#d8d8d8" strokeDasharray="8 6" />
        <Line points={wkChaikin} color={OLIVE} width={2} />
        <rect x={1432} y={709} width={31} height={18} rx={3} fill="#000" stroke="#fff" />
        <text x={1436} y={718} fill="#fff" fontSize={12} dominantBaseline="central">-0.03</text>
        <TriLeft x={1421} y={717} />
        <TriLeft x={1421} y={727} />
        <AxisText y={742} items={[["13", 895], ["AMJ", 963], ["JAS", 1033], ["OND", 1099], ["14", 1166], ["AMJ", 1233]]} />
        <text x={1341} y={748} fill="#bcc4dc" fontSize={10.5} textAnchor="middle">9/12/2014</text>
        <AxisText y={756} items={[["2013", 898], ["2014", 1166]]} />
      </Chart>
      <div className="relative h-[2px] bg-[#2d2d2d]">
        <div className="absolute top-0 left-[440px] h-[2px] w-[107px] bg-[#0000ff]" />
      </div>
    </>
  );
}

const dailyLegend: [string, string][] = [
  ["Price History", GREEN],
  ["Moving Average 50", "#1414ff"],
  ["Moving Average 200", RED],
  ["Moving Average 10", "#ff00ff"],
  ["Moving Average 20", "#00e8f0"],
  ["Bollinger Bands® 20 2", "#0e7c80"],
];

const weeklyLegend: [string, string][] = [
  ["Price", GREEN],
  ["Avg 50", "#1414ff"],
  ["Avg 200", RED],
  ["Avg 10", "#00e8f0"],
  ["Avg 2", "#ff00ff"],
  ["BBand 20 2", "#0e7c80"],
];

export default function App() {
  return (
    <div className="flex h-[760px] w-[1471px] overflow-hidden bg-black font-['Noto_Sans',sans-serif]">
      <div className="w-[879px] shrink-0 overflow-hidden">
        <Header period="Daily" legend={dailyLegend} />
        <MainPane />
        <div className="h-px w-[837px] bg-[#888888]" />
        <PaneLegend items={[["Volume", RED], ["Moving Average 50", "#ffffff"]]} />
        <LeftVolume />
        <div className="h-px w-[837px] bg-[#888888]" />
        <PaneLegend items={[["Chaikin Money Flow 20", "#a8a800"]]} />
        <LeftChaikin />
        <LeftNav />
      </div>
      <div className="w-[5px] shrink-0 bg-[#a8a8a8]" />
      <div className="w-[587px] shrink-0 overflow-hidden">
        <Header period="5 Minute" clipChange legend={[["Price History", GREEN]]} />
        <MinutePane />
        <Header period="Weekly" clipChange legend={weeklyLegend} />
        <WeeklyPane />
      </div>
    </div>
  );
}
